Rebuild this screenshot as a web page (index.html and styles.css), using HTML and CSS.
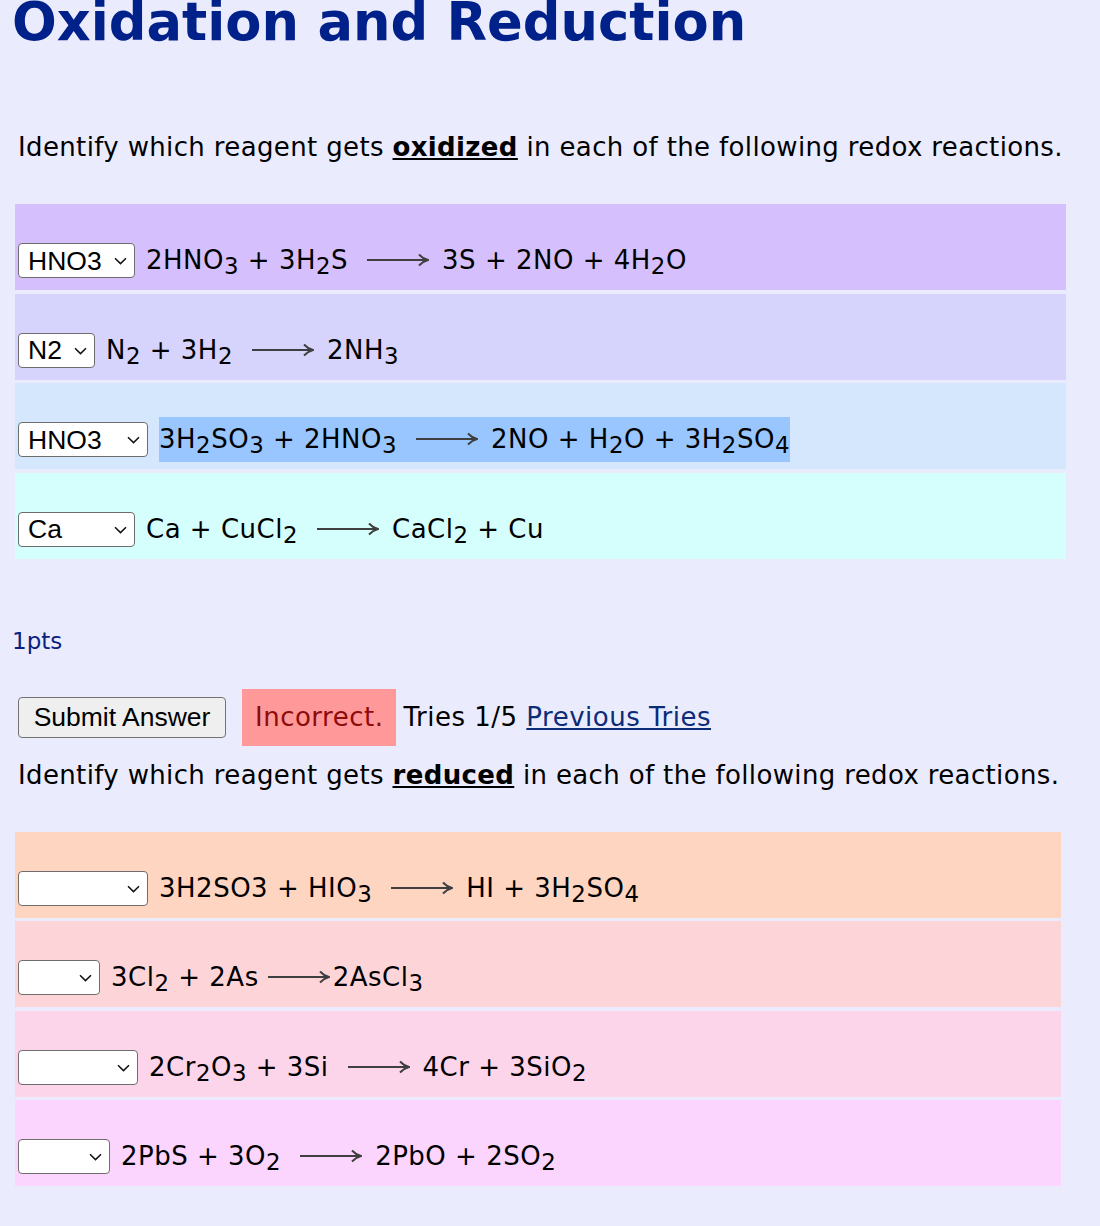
FILE: index.html
```html
<!DOCTYPE html>
<html>
<head>
  <title>Oxidation and Reduction</title>
  <link rel="stylesheet" href="styles.css">
</head>
<body>
  <h1 class="title">Oxidation and Reduction</h1>

  <p class="prompt">Identify which reagent gets <b><u>oxidized</u></b> in each of the following redox reactions.</p>

  <div class="rxn-list">
    <div class="rxn rxn-1">
      <span class="pick"><select class="w-117"><option>HNO3</option><option>H2S</option></select><svg class="chev" viewBox="0 0 13 8"><path d="M1 1.2 L6.5 6.6 L12 1.2"/></svg></span>
      <span class="eq">2HNO<sub>3</sub> + 3H<sub>2</sub>S<svg class="arrow" viewBox="0 0 62 14"><path d="M0 7 H60"/><path d="M52 1.5 Q55.5 5.5 61 7 Q55.5 8.5 52 12.5"/></svg>3S + 2NO + 4H<sub>2</sub>O</span>
    </div>
    <div class="rxn rxn-2">
      <span class="pick"><select class="w-77"><option>N2</option><option>H2</option></select><svg class="chev" viewBox="0 0 13 8"><path d="M1 1.2 L6.5 6.6 L12 1.2"/></svg></span>
      <span class="eq">N<sub>2</sub> + 3H<sub>2</sub><svg class="arrow" viewBox="0 0 62 14"><path d="M0 7 H60"/><path d="M52 1.5 Q55.5 5.5 61 7 Q55.5 8.5 52 12.5"/></svg>2NH<sub>3</sub></span>
    </div>
    <div class="rxn rxn-3">
      <span class="pick"><select class="w-130"><option>HNO3</option><option>H2SO3</option></select><svg class="chev" viewBox="0 0 13 8"><path d="M1 1.2 L6.5 6.6 L12 1.2"/></svg></span>
      <span class="eq marked">3H<sub>2</sub>SO<sub>3</sub> + 2HNO<sub>3</sub><svg class="arrow" viewBox="0 0 62 14"><path d="M0 7 H60"/><path d="M52 1.5 Q55.5 5.5 61 7 Q55.5 8.5 52 12.5"/></svg>2NO + H<sub>2</sub>O + 3H<sub>2</sub>SO<sub>4</sub></span>
    </div>
    <div class="rxn rxn-4">
      <span class="pick"><select class="w-117"><option>Ca</option><option>CuCl2</option></select><svg class="chev" viewBox="0 0 13 8"><path d="M1 1.2 L6.5 6.6 L12 1.2"/></svg></span>
      <span class="eq">Ca + CuCl<sub>2</sub><svg class="arrow" viewBox="0 0 62 14"><path d="M0 7 H60"/><path d="M52 1.5 Q55.5 5.5 61 7 Q55.5 8.5 52 12.5"/></svg>CaCl<sub>2</sub> + Cu</span>
    </div>
  </div>

  <p class="pts">1pts</p>

  <div class="submit-line">
    <button class="submit">Submit Answer</button>
    <span class="verdict">Incorrect.</span>
    <span class="tries">Tries 1/5 <a href="#">Previous Tries</a></span>
  </div>

  <p class="prompt prompt-2">Identify which reagent gets <b><u>reduced</u></b> in each of the following redox reactions.</p>

  <div class="rxn-list rxn-list-b">
    <div class="rxn rxn-5">
      <span class="pick"><select class="w-130"><option></option><option>HIO3</option></select><svg class="chev" viewBox="0 0 13 8"><path d="M1 1.2 L6.5 6.6 L12 1.2"/></svg></span>
      <span class="eq">3H2SO3 + HIO<sub>3</sub><svg class="arrow" viewBox="0 0 62 14"><path d="M0 7 H60"/><path d="M52 1.5 Q55.5 5.5 61 7 Q55.5 8.5 52 12.5"/></svg>HI + 3H<sub>2</sub>SO<sub>4</sub></span>
    </div>
    <div class="rxn rxn-6">
      <span class="pick"><select class="w-82"><option></option><option>Cl2</option></select><svg class="chev" viewBox="0 0 13 8"><path d="M1 1.2 L6.5 6.6 L12 1.2"/></svg></span>
      <span class="eq">3Cl<sub>2</sub> + 2As<svg class="arrow tight" viewBox="0 0 62 14"><path d="M0 7 H60"/><path d="M52 1.5 Q55.5 5.5 61 7 Q55.5 8.5 52 12.5"/></svg>2AsCl<sub>3</sub></span>
    </div>
    <div class="rxn rxn-7">
      <span class="pick"><select class="w-120"><option></option><option>Cr2O3</option></select><svg class="chev" viewBox="0 0 13 8"><path d="M1 1.2 L6.5 6.6 L12 1.2"/></svg></span>
      <span class="eq">2Cr<sub>2</sub>O<sub>3</sub> + 3Si<svg class="arrow" viewBox="0 0 62 14"><path d="M0 7 H60"/><path d="M52 1.5 Q55.5 5.5 61 7 Q55.5 8.5 52 12.5"/></svg>4Cr + 3SiO<sub>2</sub></span>
    </div>
    <div class="rxn rxn-8">
      <span class="pick"><select class="w-92"><option></option><option>O2</option></select><svg class="chev" viewBox="0 0 13 8"><path d="M1 1.2 L6.5 6.6 L12 1.2"/></svg></span>
      <span class="eq">2PbS + 3O<sub>2</sub><svg class="arrow" viewBox="0 0 62 14"><path d="M0 7 H60"/><path d="M52 1.5 Q55.5 5.5 61 7 Q55.5 8.5 52 12.5"/></svg>2PbO + 2SO<sub>2</sub></span>
    </div>
  </div>
</body>
</html>
```

FILE: styles.css
```css
body {
  margin: 0;
  padding: 0 15px 0 15px;
  background-color: #ebebfe;
  font-family: "DejaVu Sans", Verdana, sans-serif;
  color: #000;
}

.title {
  margin: -5px 0 0 -3px;
  font-size: 52.7px;
  line-height: 53px;
  font-weight: bold;
  color: #00208a;
}

.prompt {
  margin: 84px 0 0 3px;
  font-size: 26px;
  letter-spacing: 0.36px;
  line-height: 30px;
}

.prompt b {
  font-weight: bold;
}

.prompt-2 {
  margin-top: 14px;
}

.rxn-list {
  display: flex;
  flex-direction: column;
  gap: 3.5px;
  margin-top: 42px;
  width: 1051px;
}

.rxn-list-b {
  width: 1046px;
}

.rxn {
  display: flex;
  align-items: center;
  height: 86px;
  box-sizing: border-box;
  padding: 39px 0 12px 3px;
}

.rxn-1 { background-color: #d5c0fd; }
.rxn-2 { background-color: #d6d4fd; }
.rxn-3 { background-color: #d5e7fd; }
.rxn-4 { background-color: #d5fffd; }
.rxn-5 { background-color: #fed5c0; }
.rxn-6 { background-color: #fdd5d8; }
.rxn-7 { background-color: #fdd5ea; }
.rxn-8 { background-color: #fbd5fd; }

.pick {
  position: relative;
  display: inline-block;
  margin-right: 11px;
}

.pick select {
  appearance: none;
  -webkit-appearance: none;
  display: block;
  height: 35px;
  box-sizing: border-box;
  padding: 0 0 0 9px;
  border: 1px solid #6d6d6d;
  border-radius: 4px;
  background-color: #fff;
  font-family: "Liberation Sans", Arial, sans-serif;
  font-size: 26.5px;
  color: #000;
}

.w-77 { width: 77px; }
.w-82 { width: 82px; }
.w-92 { width: 92px; }
.w-117 { width: 117px; }
.w-120 { width: 120px; }
.w-130 { width: 130px; }

.chev {
  position: absolute;
  right: 8px;
  top: 14px;
  width: 13px;
  height: 8px;
  pointer-events: none;
}

.chev path {
  fill: none;
  stroke: #111;
  stroke-width: 1.5;
}

.eq {
  font-size: 26px;
  letter-spacing: 0.5px;
  line-height: 29px;
  white-space: nowrap;
}

.eq sub {
  font-size: 0.88em;
  vertical-align: -0.22em;
  line-height: 0;
}

.eq.marked {
  background-color: #99c6fe;
  padding: 8px 0;
}

.arrow {
  width: 62px;
  height: 14px;
  margin: 0 13px 0 19px;
  vertical-align: 2px;
}

.arrow.tight {
  margin: 0 3px 0 9px;
}

.arrow path {
  fill: none;
  stroke: #3f3f3f;
  stroke-width: 1.9;
}

.pts {
  margin: 69px 0 0 -3px;
  font-size: 23px;
  line-height: 26px;
  color: #0b1f80;
}

.submit-line {
  display: flex;
  align-items: center;
  margin-top: 35px;
  padding-left: 3px;
  font-size: 26px;
  letter-spacing: 0.5px;
}

.submit {
  height: 41px;
  width: 208px;
  padding: 0;
  border: 1px solid #727272;
  border-radius: 4px;
  background-color: #efefef;
  font-family: "Liberation Sans", Arial, sans-serif;
  font-size: 26.5px;
  letter-spacing: 0;
  color: #000;
}

.verdict {
  margin-left: 16px;
  padding: 0 13px;
  height: 57px;
  line-height: 57px;
  background-color: #ff9899;
  color: #8c0b0b;
}

.tries {
  margin-left: 7px;
}

.tries a {
  color: #0c2c78;
  text-decoration: underline;
}
```
